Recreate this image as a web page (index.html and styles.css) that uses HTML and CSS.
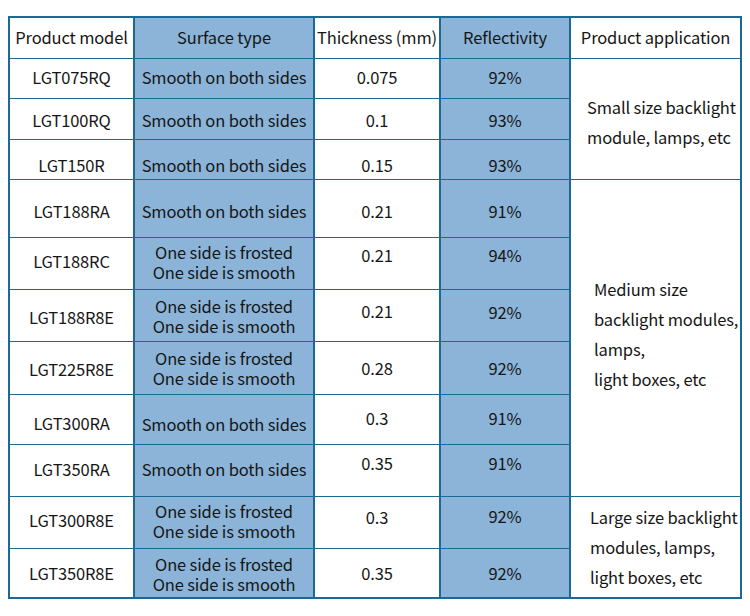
FILE: index.html
```html
<!DOCTYPE html>
<html lang="en">
<head>
<meta charset="utf-8">
<title>Product table</title>
<link rel="stylesheet" href="styles.css">
</head>
<body>
<div class="table">
  <div class="c h">Product model</div>
  <div class="c b h">Surface type</div>
  <div class="c h">Thickness (mm)</div>
  <div class="c b h">Reflectivity</div>
  <div class="c h">Product application</div>

  <div class="c">LGT075RQ</div>
  <div class="c b">Smooth on both sides</div>
  <div class="c">0.075</div>
  <div class="c b">92%</div>
  <div class="c app app-s"><p>Small size backlight<br>module, lamps, etc</p></div>

  <div class="c dn5">LGT100RQ</div>
  <div class="c b dn5">Smooth on both sides</div>
  <div class="c dn5">0.1</div>
  <div class="c b dn5">93%</div>

  <div class="c dn13">LGT150R</div>
  <div class="c b dn13">Smooth on both sides</div>
  <div class="c dn13">0.15</div>
  <div class="c b dn13">93%</div>

  <div class="c dn7">LGT188RA</div>
  <div class="c b dn7">Smooth on both sides</div>
  <div class="c dn7">0.21</div>
  <div class="c b dn7">91%</div>
  <div class="c app app-m"><p>Medium size<br>backlight modules,<br>lamps,<br>light boxes, etc</p></div>

  <div class="c up3">LGT188RC</div>
  <div class="c b two">One side is frosted<br>One side is smooth</div>
  <div class="c up14">0.21</div>
  <div class="c b up14">94%</div>

  <div class="c dn5">LGT188R8E</div>
  <div class="c b two dn3">One side is frosted<br>One side is smooth</div>
  <div class="c up6">0.21</div>
  <div class="c b up5">92%</div>

  <div class="c dn4">LGT225R8E</div>
  <div class="c b two dn2">One side is frosted<br>One side is smooth</div>
  <div class="c dn2">0.28</div>
  <div class="c b dn2">92%</div>

  <div class="c dn9">LGT300RA</div>
  <div class="c b dn11">Smooth on both sides</div>
  <div class="c">0.3</div>
  <div class="c b">91%</div>

  <div class="c">LGT350RA</div>
  <div class="c b">Smooth on both sides</div>
  <div class="c up13">0.35</div>
  <div class="c b up13">91%</div>

  <div class="c up3">LGT300R8E</div>
  <div class="c b two">One side is frosted<br>One side is smooth</div>
  <div class="c up9">0.3</div>
  <div class="c b up11">92%</div>
  <div class="c app app-l"><p>Large size backlight<br>modules, lamps,<br>light boxes, etc</p></div>

  <div class="c dn2">LGT350R8E</div>
  <div class="c b two dn4">One side is frosted<br>One side is smooth</div>
  <div class="c dn2">0.35</div>
  <div class="c b dn2">92%</div>
</div>
</body>
</html>
```

FILE: styles.css
```css
html, body {
  margin: 0;
  padding: 0;
  background: #ffffff;
}

body {
  font-family: "Noto Sans CJK SC", "Noto Sans", sans-serif;
  font-size: 16.5px;
  letter-spacing: -0.15px;
  color: #161616;
}

.table {
  margin: 16px 0 0 8px;
  width: 734px;
  box-sizing: border-box;
  display: grid;
  grid-template-columns: 123px 178px 124px 128px 169px;
  grid-template-rows: 40px 39px 40px 39px 57px 51px 51px 52px 49px 51px 51px 48px;
  gap: 1px 2px;
  border: 2px solid #1b6a96;
  background: #1b6a96;
}

.c {
  background: #ffffff;
  display: flex;
  align-items: center;
  justify-content: center;
  text-align: center;
  line-height: 20px;
  white-space: nowrap;
  box-sizing: border-box;
  padding-bottom: 3px;
}

.b {
  background: #8bb4d8;
}

.two {
  line-height: 20px;
}

.app {
  justify-content: flex-start;
  text-align: left;
  line-height: 30px;
}

.app p {
  margin: 0;
}

.app-s {
  grid-row: span 3;
  padding-left: 16px;
  padding-top: 5px;
  padding-bottom: 0;
}

.app-m {
  grid-row: span 6;
  padding-left: 23px;
  padding-bottom: 9px;
}

.app-l {
  grid-row: span 2;
  padding-left: 19px;
  padding-bottom: 1px;
}

.dn2 { padding-top: 2px; }
.dn3 { padding-top: 3px; }
.dn4 { padding-top: 4px; }
.dn5 { padding-top: 5px; }
.dn7 { padding-top: 7px; }
.dn9 { padding-top: 9px; }
.dn11 { padding-top: 11px; }
.dn13 { padding-top: 13px; }
.up3 { padding-bottom: 6px; }
.up5 { padding-bottom: 8px; }
.up6 { padding-bottom: 9px; }
.up9 { padding-bottom: 12px; }
.up11 { padding-bottom: 14px; }
.up13 { padding-bottom: 16px; }
.up14 { padding-bottom: 17px; }
```
